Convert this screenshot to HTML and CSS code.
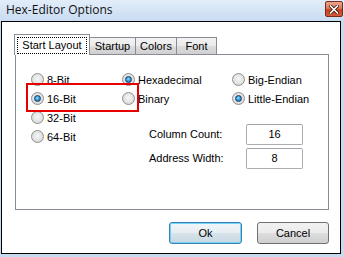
FILE: index.html
```html
<!DOCTYPE html>
<html>
<head>
<meta charset="utf-8">
<link rel="stylesheet" href="styles.css">
</head>
<body>
<div class="window">
  <div class="titlebar">
    <span class="title">Hex-Editor Options</span>
    <span class="close">
      <svg width="10" height="9" viewBox="0 0 10 9">
        <path d="M1.5 1 L8.5 8 M8.5 1 L1.5 8" stroke="#3a1a12" stroke-width="3.2" stroke-linecap="square"/>
        <path d="M1.5 1 L8.5 8 M8.5 1 L1.5 8" stroke="#ffffff" stroke-width="1.6" stroke-linecap="square"/>
      </svg>
    </span>
  </div>
  <div class="client">
    <div class="tabs">
      <div class="tab selected"><span class="focus">Start Layout</span></div>
      <div class="tab t-startup">Startup</div>
      <div class="tab t-colors">Colors</div>
      <div class="tab t-font">Font</div>
    </div>
    <div class="panel">
      <div class="col col1">
        <div class="opt"><span class="radio"></span><span>8-Bit</span></div>
        <div class="opt"><span class="radio on"></span><span>16-Bit</span></div>
        <div class="opt"><span class="radio"></span><span>32-Bit</span></div>
        <div class="opt"><span class="radio"></span><span>64-Bit</span></div>
      </div>
      <div class="right">
        <div class="radios">
          <div class="col col2">
            <div class="opt"><span class="radio on"></span><span>Hexadecimal</span></div>
            <div class="opt"><span class="radio"></span><span>Binary</span></div>
          </div>
          <div class="col col3">
            <div class="opt"><span class="radio"></span><span>Big-Endian</span></div>
            <div class="opt"><span class="radio on"></span><span>Little-Endian</span></div>
          </div>
        </div>
        <div class="fields">
          <div class="field"><span class="flabel">Column Count:</span><span class="input">16</span></div>
          <div class="field"><span class="flabel">Address Width:</span><span class="input">8</span></div>
        </div>
      </div>
      <div class="highlight"></div>
    </div>
    <div class="buttons">
      <div class="btn default">Ok</div>
      <div class="btn cancel">Cancel</div>
    </div>
  </div>
</div>
</body>
</html>
```
FILE: styles.css
```css
html, body {
  margin: 0;
  padding: 0;
  background: #ffffff;
}
body {
  font-family: "Liberation Sans", Arial, sans-serif;
  font-size: 11px;
  color: #000000;
}
.window {
  width: 344px;
  height: 257px;
  box-sizing: border-box;
  background: #c6daf1;
  display: flex;
  flex-direction: column;
  overflow: hidden;
}
.titlebar {
  height: 21px;
  flex: none;
  background: linear-gradient(to bottom, #e2edf9 0%, #d5e4f5 50%, #c9dcf2 100%);
  display: flex;
  align-items: flex-start;
  justify-content: space-between;
}
.title {
  font-family: "Open Sans", "Liberation Sans", sans-serif;
  font-size: 12px;
  color: #111111;
  padding-left: 6px;
  line-height: 20px;
}
.close {
  width: 18px;
  height: 16px;
  margin-top: 1px;
  margin-right: 1px;
  box-sizing: border-box;
  border: 1px solid #7a2a1a;
  border-radius: 2px;
  background: linear-gradient(to bottom, #eba48e 0%, #dc7a5c 45%, #c8401c 55%, #d3583a 100%);
  display: flex;
  align-items: center;
  justify-content: center;
}
.client {
  flex: 1;
  margin: 0 3px 3px 1px;
  border: 1px solid #000000;
  background: #ffffff;
  display: flex;
  flex-direction: column;
}
.tabs {
  height: 32px;
  flex: none;
  display: flex;
  align-items: flex-end;
  padding-left: 12px;
  position: relative;
  z-index: 2;
}
.tab {
  height: 17px;
  box-sizing: border-box;
  border: 1px solid #898c95;
  border-bottom: none;
  margin-left: -1px;
  background: linear-gradient(to bottom, #f2f2f2 0%, #ebebeb 50%, #dddddd 51%, #cfcfcf 100%);
  display: flex;
  align-items: center;
  justify-content: center;
  line-height: 13px;
}
.tab.selected {
  height: 21px;
  margin-left: 0;
  margin-bottom: -1px;
  width: 76px;
  background: #ffffff;
  padding: 2px 2px 1px 2px;
  z-index: 3;
}
.focus {
  flex: 1;
  align-self: stretch;
  border: 1px dotted #000000;
  display: flex;
  align-items: center;
  justify-content: center;
}
.t-startup { width: 47px; }
.t-colors { width: 42px; }
.t-font { width: 41px; }
.panel {
  margin-left: 13px;
  width: 314px;
  height: 156px;
  box-sizing: border-box;
  border: 1px solid #898c95;
  background: #ffffff;
  padding: 15px 0 0 15px;
  display: flex;
  position: relative;
  z-index: 1;
}
.col {
  display: flex;
  flex-direction: column;
}
.col1 { width: 91px; }
.col2 { width: 110px; }
.opt {
  height: 19px;
  display: flex;
  align-items: center;
  gap: 3px;
}
.radio {
  width: 13px;
  height: 13px;
  box-sizing: border-box;
  border-radius: 50%;
  border: 1px solid #8e8f8f;
  background: radial-gradient(circle at 50% 45%, #f6f6f6 0%, #e6e6e6 45%, #cfcfcf 100%);
  position: relative;
  flex: none;
}
.radio.on::after {
  content: "";
  position: absolute;
  left: 2px;
  top: 2px;
  width: 7px;
  height: 7px;
  box-sizing: border-box;
  border-radius: 50%;
  border: 1px solid #1a3a5c;
  background: radial-gradient(circle at 45% 40%, #9fe0ff 0%, #3aa5e6 40%, #0d5da8 100%);
}
.right {
  display: flex;
  flex-direction: column;
}
.radios {
  display: flex;
}
.fields {
  margin-top: 16px;
  padding-left: 27px;
  display: flex;
  flex-direction: column;
}
.field {
  height: 24px;
  display: flex;
  align-items: flex-start;
}
.flabel {
  width: 97px;
  line-height: 21px;
}
.input {
  width: 57px;
  height: 21px;
  box-sizing: border-box;
  border: 1px solid #abadb3;
  border-top-color: #a0a2a8;
  border-radius: 2px;
  background: #ffffff;
  text-align: center;
  line-height: 19px;
}
.highlight {
  position: absolute;
  left: 10px;
  top: 28px;
  width: 113px;
  height: 29px;
  box-sizing: border-box;
  border: 2px solid #e60000;
}
.buttons {
  margin-top: 12px;
  display: flex;
  justify-content: flex-end;
  gap: 15px;
  padding-right: 11px;
}
.btn {
  height: 22px;
  box-sizing: border-box;
  border: 1px solid #707070;
  border-radius: 3px;
  background: linear-gradient(to bottom, #f2f2f2 0%, #ebebeb 50%, #dddddd 51%, #cfcfcf 100%);
  display: flex;
  align-items: center;
  justify-content: center;
}
.btn.default {
  width: 73px;
  border-color: #3c7fb1;
  box-shadow: inset 0 0 0 1px #6fd6f8;
  background: linear-gradient(to bottom, #f0f5f8 0%, #e6eef3 50%, #d7e3ea 51%, #c9d8e2 100%);
}
.btn.cancel {
  width: 72px;
}
```
